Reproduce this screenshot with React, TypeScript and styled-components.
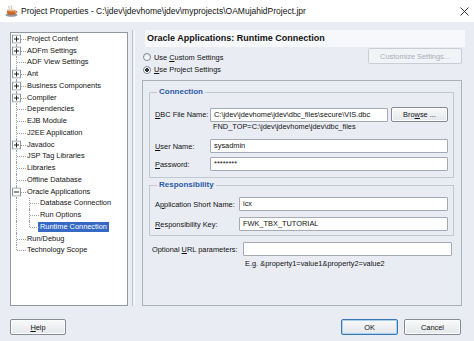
import styled, { createGlobalStyle } from "styled-components"

const GlobalStyle = createGlobalStyle`
html, body {
margin: 0;
padding: 0;
background: #e9ecf3;
}
body {
font-family: "Liberation Sans", Arial, sans-serif;
color: #111;
}
`

type Node = {
  label: string
  level: 1 | 2
  toggle?: "+" | "-"
  selected?: boolean
}

const tree: Node[] = [
  { label: "Project Content", level: 1, toggle: "+" },
  { label: "ADFm Settings", level: 1, toggle: "+" },
  { label: "ADF View Settings", level: 1 },
  { label: "Ant", level: 1, toggle: "+" },
  { label: "Business Components", level: 1, toggle: "+" },
  { label: "Compiler", level: 1, toggle: "+" },
  { label: "Dependencies", level: 1 },
  { label: "EJB Module", level: 1 },
  { label: "J2EE Application", level: 1 },
  { label: "Javadoc", level: 1, toggle: "+" },
  { label: "JSP Tag Libraries", level: 1 },
  { label: "Libraries", level: 1 },
  { label: "Offline Database", level: 1 },
  { label: "Oracle Applications", level: 1, toggle: "-" },
  { label: "Database Connection", level: 2 },
  { label: "Run Options", level: 2 },
  { label: "Runtime Connection", level: 2, selected: true },
  { label: "Run/Debug", level: 1 },
  { label: "Technology Scope", level: 1 },
]

const ToggleBox = ({ sign }: { sign: "+" | "-" }) => (
  <ToggleSvg width="9" height="9" viewBox="0 0 9 9">
    <rect x="0.5" y="0.5" width="8" height="8" fill="#fff" stroke="#8c969f" />
    <line x1="2" y1="4.5" x2="7" y2="4.5" stroke="#222" />
    {sign === "+" && <line x1="4.5" y1="2" x2="4.5" y2="7" stroke="#222" />}
  </ToggleSvg>
)

const CupIcon = () => (
  <svg width="13" height="12" viewBox="0 0 13 12">
    <path d="M4 1 C3 2.5 5 3 4 4.5 M6.5 0.5 C5.5 2 7.5 2.5 6.5 4" stroke="#b9b2a4" fill="none" />
    <ellipse cx="6.5" cy="10" rx="6" ry="1.8" fill="#8e99a6" />
    <path d="M2 5.5 H10.5 V7.5 C10.5 9.5 9 10 6.5 10 C4 10 2 9.5 2 7.5 Z" fill="#c96a2c" />
    <path d="M10.5 6 C12.3 6 12.3 8.5 10.2 8.5" stroke="#a5562a" fill="none" />
    <ellipse cx="6.25" cy="5.5" rx="4.25" ry="0.9" fill="#e9b27e" />
  </svg>
)

const CloseIcon = () => (
  <svg width="9" height="9" viewBox="0 0 9 9">
    <path d="M0.5 0.5 L8.5 8.5 M8.5 0.5 L0.5 8.5" stroke="#222" strokeWidth="0.9" />
  </svg>
)

const App = () => {
  return (
    <>
      <GlobalStyle />
      <Window>
        <TitleBar>
          <CupIcon />
          <TitleText>Project Properties - C:\jdev\jdevhome\jdev\myprojects\OAMujahidProject.jpr</TitleText>
          <CloseBox>
            <CloseIcon />
          </CloseBox>
        </TitleBar>

        <Main>
          <Tree>
            {tree.map((n, i) => {
              const isFirst = i === 0
              const isLast = i === tree.length - 1
              const nextIsLevel2 = tree[i + 1] && tree[i + 1].level === 2
              const lastChild = n.level === 2 && !(tree[i + 1] && tree[i + 1].level === 2)
              return (
                <TreeRow key={n.label}>
                  {n.level === 2 && <Pipe />}
                  <Branch $first={isFirst} $last={n.level === 2 ? lastChild : isLast}>
                    {n.toggle && <ToggleBox sign={n.toggle} />}
                  </Branch>
                  <NodeLabel $selected={n.selected}>{n.label}</NodeLabel>
                  {nextIsLevel2 && null}
                </TreeRow>
              )
            })}
          </Tree>

          <Divider />

          <RightPane>
            <PageHeader>Oracle Applications: Runtime Connection</PageHeader>

            <OptionsRow>
              <RadioList>
                <RadioRow>
                  <Radio />
                  <span>Use <U>C</U>ustom Settings</span>
                </RadioRow>
                <RadioRow>
                  <Radio $checked />
                  <span><U>U</U>se Project Settings</span>
                </RadioRow>
              </RadioList>
              <Button $w={94} disabled>Customize Settings...</Button>
            </OptionsRow>

            <SettingsBox>
              <Group $mt={0}>
                <Legend>Connection</Legend>
                <FieldRow $mt={9}>
                  <Label $w={55}><U>D</U>BC File Name:</Label>
                  <Field>C:\jdev\jdevhome\jdev\dbc_files\secure\VIS.dbc</Field>
                  <Button $w={57} $h={15}>Bro<U>w</U>se ...</Button>
                </FieldRow>
                <Hint $pl={58}>FND_TOP=C:\jdev\jdevhome\jdev\dbc_files</Hint>
                <FieldRow $mt={7}>
                  <Label $w={55}><U>U</U>ser Name:</Label>
                  <Field>sysadmin</Field>
                </FieldRow>
                <FieldRow $mt={4}>
                  <Label $w={55}><U>P</U>assword:</Label>
                  <Field>********</Field>
                </FieldRow>
                <Spacer $h={6} />
              </Group>

              <Group $mt={1}>
                <Legend>Responsibility</Legend>
                <FieldRow $mt={6}>
                  <Label $w={84}>A<U>p</U>plication Short Name:</Label>
                  <Field>icx</Field>
                </FieldRow>
                <FieldRow $mt={6}>
                  <Label $w={84}><U>R</U>esponsibility Key:</Label>
                  <Field>FWK_TBX_TUTORIAL</Field>
                </FieldRow>
                <Spacer $h={4} />
              </Group>

              <UrlBlock>
                <FieldRow $mt={0}>
                  <Label $w={91}>Optional <U>U</U>RL parameters:</Label>
                  <Field />
                </FieldRow>
                <Hint $pl={93} $mt={3}>E.g. &amp;property1=value1&amp;property2=value2</Hint>
              </UrlBlock>
            </SettingsBox>
          </RightPane>
        </Main>

        <Footer>
          <Button $w={56}><U>H</U>elp</Button>
          <FooterRight>
            <Button $w={57} $default>OK</Button>
            <Button $w={57}>Cancel</Button>
          </FooterRight>
        </Footer>
      </Window>
    </>
  )
}

export default App

const Window = styled.div`
width: 474px;
height: 341px;
overflow: hidden;
display: flex;
flex-direction: column;
background: #e9ecf3;
font-size: 7.4px;
`

const TitleBar = styled.div`
height: 22px;
flex: none;
background: #ffffff;
display: flex;
align-items: center;
padding-left: 5px;
gap: 3px;
`

const TitleText = styled.span`
font-size: 8.5px;
color: #111;
white-space: nowrap;
`

const CloseBox = styled.div`
margin-left: auto;
margin-right: 5px;
display: flex;
align-items: center;
`

const Main = styled.div`
height: 284px;
flex: none;
box-sizing: border-box;
padding: 8px 9px 0 10px;
display: flex;
`

const Tree = styled.div`
width: 118px;
height: 274px;
margin-top: 2px;
box-sizing: border-box;
background: #ffffff;
border: 1px solid #8f98a3;
flex: none;
`

const TreeRow = styled.div`
height: 11.75px;
display: flex;
align-items: center;
white-space: nowrap;
`

const Pipe = styled.span`
position: relative;
width: 13px;
height: 100%;
flex: none;
&::before {
content: "";
position: absolute;
left: 5px;
top: 0;
bottom: 0;
border-left: 1px dotted #9aa0a8;
}
`

const Branch = styled.span<{ $first?: boolean; $last?: boolean }>`
position: relative;
width: 13px;
height: 100%;
flex: none;
&::before {
content: "";
position: absolute;
left: 5px;
top: ${(p) => (p.$first ? "50%" : "0")};
bottom: ${(p) => (p.$last ? "50%" : "0")};
border-left: 1px dotted #9aa0a8;
}
&::after {
content: "";
position: absolute;
left: 6px;
right: -2px;
top: 50%;
border-top: 1px dotted #9aa0a8;
}
`

const ToggleSvg = styled.svg`
position: absolute;
left: 1px;
top: 50%;
transform: translateY(-50%);
z-index: 1;
`

const NodeLabel = styled.span<{ $selected?: boolean }>`
margin-left: 1px;
padding: 0 2px;
line-height: 10px;
color: ${(p) => (p.$selected ? "#ffffff" : "#111")};
background: ${(p) => (p.$selected ? "#3669c4" : "transparent")};
`

const Divider = styled.div`
width: 1px;
margin-left: 4px;
margin-right: 7px;
border-left: 1px solid #bcc3cd;
border-right: 1px solid #fbfcfd;
flex: none;
`

const RightPane = styled.div`
flex: 1;
display: flex;
flex-direction: column;
min-width: 0;
`

const PageHeader = styled.div`
height: 17px;
line-height: 17px;
margin-left: 3px;
padding-left: 2px;
background: #f7f8fb;
font-size: 9px;
font-weight: bold;
color: #111;
`

const OptionsRow = styled.div`
height: 28px;
margin-top: 1px;
margin-right: 3px;
display: flex;
justify-content: space-between;
align-items: flex-start;
`

const RadioList = styled.div`
padding-top: 3px;
padding-left: 1px;
`

const RadioRow = styled.div`
height: 12.5px;
display: flex;
align-items: center;
gap: 3px;
`

const Radio = styled.span<{ $checked?: boolean }>`
width: 8px;
height: 8px;
box-sizing: border-box;
border-radius: 50%;
border: 1px solid #7d8795;
background: ${(p) =>
    p.$checked
      ? "radial-gradient(circle, #333 0 1.6px, #fff 2.1px)"
      : "linear-gradient(#e6e9ee, #ffffff)"};
flex: none;
`

const U = styled.span`
text-decoration: underline;
`

const Button = styled.button<{ $w: number; $h?: number; $default?: boolean }>`
width: ${(p) => p.$w}px;
height: ${(p) => p.$h ?? 16}px;
flex: none;
padding: 0;
box-sizing: border-box;
font-family: "Liberation Sans", Arial, sans-serif;
font-size: 7.4px;
color: #111;
border-radius: 2px;
border: 1px solid ${(p) => (p.$default ? "#3a78b5" : "#858b94")};
background: linear-gradient(#f8f9fa, #e4e7ec);
box-shadow: inset 0 0 0 1px ${(p) => (p.$default ? "#a9d0ef" : "#fdfdfd")};
&:disabled {
color: #a9aeb6;
border-color: #c9ced6;
background: #f1f3f6;
box-shadow: none;
}
`

const SettingsBox = styled.div`
flex: 1;
margin-top: 4px;
margin-right: 3px;
box-sizing: border-box;
border: 1px solid #aab1bb;
padding: 5px 7px 0 6px;
`

const Group = styled.fieldset<{ $mt: number }>`
margin: ${(p) => p.$mt}px 0 0 0;
padding: 0 5px;
border: 1px solid #c2c8d1;
min-width: 0;
`

const Legend = styled.legend`
margin-left: 2px;
padding: 0 2px;
height: 12px;
line-height: 12px;
font-size: 8px;
font-weight: bold;
color: #2c5aa8;
`

const FieldRow = styled.div<{ $mt: number }>`
margin-top: ${(p) => p.$mt}px;
display: flex;
align-items: center;
gap: 3px;
`

const Label = styled.span<{ $w: number }>`
width: ${(p) => p.$w - 3}px;
flex: none;
white-space: nowrap;
`

const Field = styled.div`
flex: 1;
height: 14px;
line-height: 12px;
box-sizing: border-box;
border: 1px solid #a3abb6;
border-radius: 1px;
background: #ffffff;
padding-left: 3px;
white-space: nowrap;
overflow: hidden;
`

const Hint = styled.div<{ $pl: number; $mt?: number }>`
height: 10px;
line-height: 10px;
margin-top: ${(p) => p.$mt ?? 0}px;
padding-left: ${(p) => p.$pl}px;
white-space: nowrap;
`

const Spacer = styled.div<{ $h: number }>`
height: ${(p) => p.$h}px;
`

const UrlBlock = styled.div`
margin-top: 6px;
padding-left: 3px;
margin-right: 2px;
`

const Footer = styled.div`
flex: 1;
display: flex;
align-items: flex-start;
padding: 13px 13px 0 10px;
`

const FooterRight = styled.div`
margin-left: auto;
display: flex;
gap: 6px;
`
